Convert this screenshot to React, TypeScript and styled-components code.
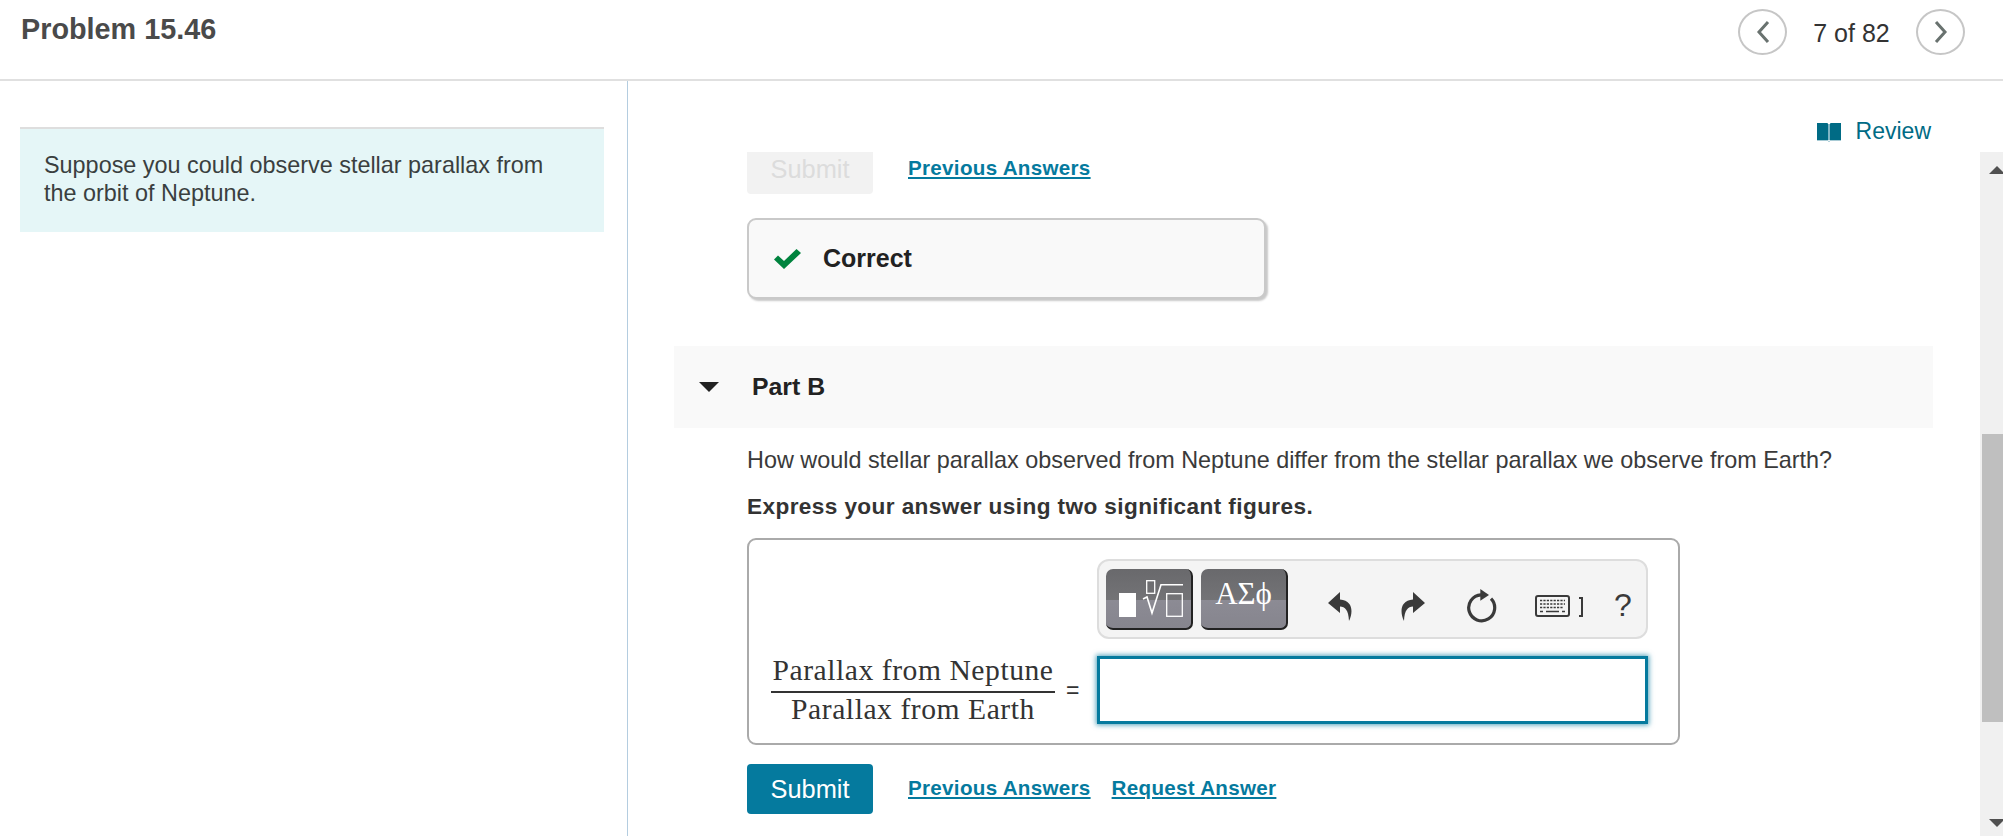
import React from "react";
import styled, { createGlobalStyle } from "styled-components";

const GlobalStyle = createGlobalStyle`
  html, body {
    margin: 0;
    padding: 0;
    background: #fff;
    overflow: hidden;
  }
  * { box-sizing: border-box; }
`;

const Page = styled.div`
  width: 2003px;
  height: 836px;
  display: flex;
  flex-direction: column;
  overflow: hidden;
  font-family: "Liberation Sans", Arial, sans-serif;
  color: #333;
`;

const Header = styled.header`
  height: 81px;
  flex: none;
  display: flex;
  align-items: flex-start;
  justify-content: space-between;
  padding: 7px 38px 0 21px;
  border-bottom: 2px solid #e0e0e0;
`;

const Title = styled.h1`
  margin: 4px 0 0;
  font-size: 28.8px;
  line-height: 36px;
  font-weight: 700;
  color: #4a4a4a;
`;

const Pager = styled.nav`
  display: flex;
  align-items: center;
`;

const PagerCount = styled.span`
  width: 129px;
  text-align: center;
  font-size: 25px;
  line-height: 46px;
  padding-top: 3px;
  color: #333;
`;

const RoundButton = styled.button`
  width: 49px;
  height: 46px;
  padding: 0;
  display: flex;
  align-items: center;
  justify-content: center;
  background: #fff;
  border: 2px solid #c6c6c6;
  border-radius: 50%;
`;

const Main = styled.div`
  flex: 1;
  min-height: 0;
  display: flex;
`;

const Aside = styled.aside`
  width: 628px;
  flex: none;
  padding: 46px 23px 0 20px;
  border-right: 1px solid #b4cde0;
`;

const InfoBox = styled.div`
  height: 105px;
  padding: 22px 50px 0 24px;
  background: #e5f6f7;
  border-top: 2px solid #dedede;
  font-size: 23.4px;
  line-height: 28px;
  color: #3a3f3f;
`;

const Content = styled.div`
  flex: 1;
  min-width: 0;
  display: flex;
  flex-direction: column;
`;

const ReviewRow = styled.div`
  height: 71px;
  flex: none;
  display: flex;
  justify-content: flex-end;
  align-items: flex-start;
  gap: 15px;
  padding: 35px 72px 0 0;
`;

const BookSlot = styled.div`
  margin-top: 6px;
`;

const ReviewLink = styled.a`
  font-size: 23px;
  line-height: 30px;
  color: #006b85;
`;

const ScrollArea = styled.div`
  flex: 1;
  min-height: 0;
  display: flex;
`;

const ScrollBody = styled.div`
  flex: 1;
  min-width: 0;
  overflow: hidden;
  padding: 0 47px 0 46px;
`;

const Indented = styled.div`
  padding-left: 73px;
`;

const ActionRow = styled.div<{ $clipped?: boolean }>`
  display: flex;
  align-items: center;
  margin-top: ${(p) => (p.$clipped ? "-8px" : "19px")};
`;

const SubmitButton = styled.button<{ $ghost?: boolean }>`
  width: 126px;
  height: 50px;
  flex: none;
  padding: 0;
  border: 0;
  border-radius: 4px;
  font-family: inherit;
  font-size: 25.4px;
  background: ${(p) => (p.$ghost ? "#f2f2f2" : "#057a9e")};
  color: ${(p) => (p.$ghost ? "#dcdcdc" : "#fff")};
`;

const ActionLink = styled.a<{ $first?: boolean }>`
  margin-left: ${(p) => (p.$first ? "35px" : "21px")};
  margin-top: -2px;
  font-size: 20.6px;
  line-height: 26px;
  font-weight: 700;
  letter-spacing: 0.3px;
  color: #057a9e;
  text-decoration: underline;
  text-decoration-thickness: 2px;
  text-underline-offset: 2px;
`;

const Feedback = styled.div`
  width: 519px;
  height: 81px;
  margin-top: 24px;
  display: flex;
  align-items: center;
  gap: 22px;
  padding: 0 0 0 25px;
  background: #f9f9f9;
  border: 2px solid #c9c9c9;
  border-radius: 9px;
  box-shadow: 2px 2px 2px #c9c9c9;
  font-size: 25px;
  font-weight: 700;
  color: #222;
`;

const PartBar = styled.div`
  height: 82px;
  margin-top: 47px;
  display: flex;
  align-items: center;
  padding-left: 25px;
  background: #f9f9f9;
  font-size: 24.8px;
  font-weight: 700;
  color: #222;
`;

const Caret = styled.span`
  width: 0;
  height: 0;
  margin-right: 33px;
  border-left: 10px solid transparent;
  border-right: 10px solid transparent;
  border-top: 10px solid #222;
`;

const Question = styled.p`
  margin: 17px 0 0;
  font-size: 23.4px;
  line-height: 30px;
  color: #3a3a3a;
`;

const Instruction = styled.p`
  margin: 17px 0 0;
  font-size: 22.6px;
  line-height: 30px;
  font-weight: 700;
  letter-spacing: 0.4px;
  color: #333;
`;

const AnswerBox = styled.div`
  width: 933px;
  height: 207px;
  margin-top: 16px;
  display: flex;
  flex-direction: column;
  align-items: flex-end;
  padding: 19px 30px 0 0;
  border: 2px solid #aaa;
  border-radius: 9px;
`;

const Toolbar = styled.div`
  width: 551px;
  height: 80px;
  display: flex;
  align-items: center;
  padding-left: 7px;
  background: #f4f4f4;
  border: 2px solid #ddd;
  border-radius: 12px;
`;

const MathButton = styled.div<{ $spaced?: boolean }>`
  width: 87px;
  height: 61px;
  flex: none;
  margin-left: ${(p) => (p.$spaced ? "8px" : "0")};
  display: flex;
  align-items: center;
  justify-content: center;
  border-radius: 7px;
  border-right: 2px solid #222;
  border-bottom: 2px solid #222;
  background: linear-gradient(#69696c 0, #737376 52%, #8c8b94 52%, #86858e 100%);
  color: #fff;
  font-family: "Liberation Serif", serif;
  font-size: 31px;
  padding-bottom: ${(p) => (p.$spaced ? "8px" : "0")};
`;

const RadicalSvg = styled.svg`
  margin-left: 6px;
`;

const ToolIcon = styled.div<{ $gap: number }>`
  flex: none;
  margin-left: ${(p) => p.$gap}px;
  margin-top: 14px;
  display: flex;
  align-items: center;
  color: #3a3a3a;
`;

const HelpMark = styled.span`
  font-size: 32px;
  line-height: 30px;
  color: #3a3a3a;
  margin-top: -3px;
`;

const FormulaRow = styled.div`
  margin-top: 17px;
  display: flex;
  align-items: flex-start;
`;

const Fraction = styled.div`
  width: 284px;
  display: flex;
  flex-direction: column;
  align-items: center;
  font-family: "Liberation Serif", serif;
  font-size: 29.6px;
  letter-spacing: 0.55px;
  color: #333;
`;

const Numerator = styled.div`
  width: 100%;
  height: 37px;
  line-height: 28px;
  text-align: center;
  border-bottom: 2px solid #333;
`;

const Denominator = styled.div`
  height: 32px;
  line-height: 32px;
`;

const EqualSign = styled.span`
  width: 42px;
  padding-left: 11px;
  font-size: 23px;
  line-height: 68px;
  color: #333;
`;

const AnswerInput = styled.input`
  width: 551px;
  height: 68px;
  padding: 0 8px;
  background: #fff;
  border: 3px solid #057a9e;
  outline: 0;
  box-shadow: 0 0 5px 1px rgba(5, 122, 158, 0.7);
`;

const ScrollTrack = styled.div`
  width: 23px;
  flex: none;
  position: relative;
  background: #f0f0f0;
  overflow: hidden;
`;

const ScrollThumb = styled.div`
  position: absolute;
  left: 2px;
  right: 0;
  top: 282px;
  height: 288px;
  background: #bfbfbf;
`;

const ScrollArrow = styled.div<{ $down?: boolean }>`
  position: absolute;
  left: 9px;
  width: 0;
  height: 0;
  border-left: 8px solid transparent;
  border-right: 8px solid transparent;
  ${(p) =>
    p.$down
      ? "bottom: 9px; border-top: 8px solid #505050;"
      : "top: 14px; border-bottom: 8px solid #505050;"}
`;

const Chevron = ({ left }: { left?: boolean }) => (
  <svg width="14" height="24" viewBox="0 0 14 24" fill="none">
    <path
      d={left ? "M12 2 L3 12 L12 22" : "M2 2 L11 12 L2 22"}
      stroke="#69726f"
      strokeWidth="3"
    />
  </svg>
);

const CheckIcon = () => (
  <svg width="27" height="20" viewBox="0 0 27 20">
    <path d="M0 10.5 L4 6.5 L10 12 L22.5 0 L27 4 L10 20 Z" fill="#00833e" />
  </svg>
);

const BookIcon = () => (
  <svg width="24" height="20" viewBox="0 0 24 20">
    <rect x="10" y="2" width="4" height="16" fill="#7fb5c4" />
    <path d="M0 1 H10 Q11 1 11 2 V18 H0 Z M13 2 Q13 1 14 1 H24 V18 H13 Z" fill="#006b85" />
    <path d="M0 18.5 H11 L12 20 L13 18.5 H24" stroke="#a8cbd5" strokeWidth="1" fill="none" />
  </svg>
);

const ArrowIcon = ({ flip }: { flip?: boolean }) => (
  <svg
    width="25"
    height="29"
    viewBox="0 0 25 29"
    style={flip ? { transform: "scaleX(-1)" } : undefined}
  >
    <path
      d="M12 0 L0 11 L12 21 V14.5 C17 14.5 20.5 18 21 29 C25 21 25.5 8.5 12 7.5 Z"
      fill="currentColor"
    />
  </svg>
);

const ResetIcon = () => (
  <svg width="31" height="34" viewBox="0 0 31 34" fill="none">
    <path d="M14 5.8 A13 13 0 1 0 24 9.7" stroke="currentColor" strokeWidth="3.2" />
    <path d="M13.3 0 L22 6 L13.3 11.7 Z" fill="currentColor" />
  </svg>
);

const KeyboardIcon = () => (
  <svg width="48" height="23" viewBox="0 0 48 23" fill="none">
    <rect x="1" y="1" width="33" height="20" rx="2" stroke="currentColor" strokeWidth="2" />
    <path
      d="M5 5.5 H30 M5 9 H30 M5 12.5 H28"
      stroke="currentColor"
      strokeWidth="1.7"
      strokeDasharray="2.2 1.2"
    />
    <path d="M5 16.5 H8 M11 16.5 H24 M27 16.5 H30" stroke="currentColor" strokeWidth="1.7" />
    <path d="M44 3 H47 V21 H44" stroke="currentColor" strokeWidth="2" />
  </svg>
);

const RadicalIcon = () => (
  <RadicalSvg width="65" height="37" viewBox="0 0 65 37" fill="none">
    <rect x="0" y="13" width="17" height="24" fill="#fff" />
    <rect x="27.7" y="0.7" width="8" height="12.6" stroke="#fff" strokeWidth="1.3" />
    <path d="M24 19 L28 17 L33 33 L42 4.7 H64" stroke="#fff" strokeWidth="1.6" />
    <rect x="47.7" y="13.7" width="15.6" height="22.6" stroke="#fff" strokeWidth="1.3" />
  </RadicalSvg>
);

export default function App() {
  return (
    <Page>
      <GlobalStyle />
      <Header>
        <Title>Problem 15.46</Title>
        <Pager>
          <RoundButton aria-label="Previous">
            <Chevron left />
          </RoundButton>
          <PagerCount>7 of 82</PagerCount>
          <RoundButton aria-label="Next">
            <Chevron />
          </RoundButton>
        </Pager>
      </Header>
      <Main>
        <Aside>
          <InfoBox>Suppose you could observe stellar parallax from the orbit of Neptune.</InfoBox>
        </Aside>
        <Content>
          <ReviewRow>
            <BookSlot>
              <BookIcon />
            </BookSlot>
            <ReviewLink>Review</ReviewLink>
          </ReviewRow>
          <ScrollArea>
            <ScrollBody>
              <Indented>
                <ActionRow $clipped>
                  <SubmitButton $ghost>Submit</SubmitButton>
                  <ActionLink $first>Previous Answers</ActionLink>
                </ActionRow>
                <Feedback>
                  <CheckIcon />
                  Correct
                </Feedback>
              </Indented>
              <PartBar>
                <Caret />
                Part B
              </PartBar>
              <Indented>
                <Question>
                  How would stellar parallax observed from Neptune differ from the stellar parallax we observe from Earth?
                </Question>
                <Instruction>Express your answer using two significant figures.</Instruction>
                <AnswerBox>
                  <Toolbar>
                    <MathButton>
                      <RadicalIcon />
                    </MathButton>
                    <MathButton $spaced>ΑΣϕ</MathButton>
                    <ToolIcon $gap={40}>
                      <ArrowIcon />
                    </ToolIcon>
                    <ToolIcon $gap={47}>
                      <ArrowIcon flip />
                    </ToolIcon>
                    <ToolIcon $gap={42}>
                      <ResetIcon />
                    </ToolIcon>
                    <ToolIcon $gap={37}>
                      <KeyboardIcon />
                    </ToolIcon>
                    <ToolIcon $gap={31}>
                      <HelpMark>?</HelpMark>
                    </ToolIcon>
                  </Toolbar>
                  <FormulaRow>
                    <Fraction>
                      <Numerator>Parallax from Neptune</Numerator>
                      <Denominator>Parallax from Earth</Denominator>
                    </Fraction>
                    <EqualSign>=</EqualSign>
                    <AnswerInput />
                  </FormulaRow>
                </AnswerBox>
                <ActionRow>
                  <SubmitButton>Submit</SubmitButton>
                  <ActionLink $first>Previous Answers</ActionLink>
                  <ActionLink>Request Answer</ActionLink>
                </ActionRow>
              </Indented>
            </ScrollBody>
            <ScrollTrack>
              <ScrollArrow />
              <ScrollThumb />
              <ScrollArrow $down />
            </ScrollTrack>
          </ScrollArea>
        </Content>
      </Main>
    </Page>
  );
}
